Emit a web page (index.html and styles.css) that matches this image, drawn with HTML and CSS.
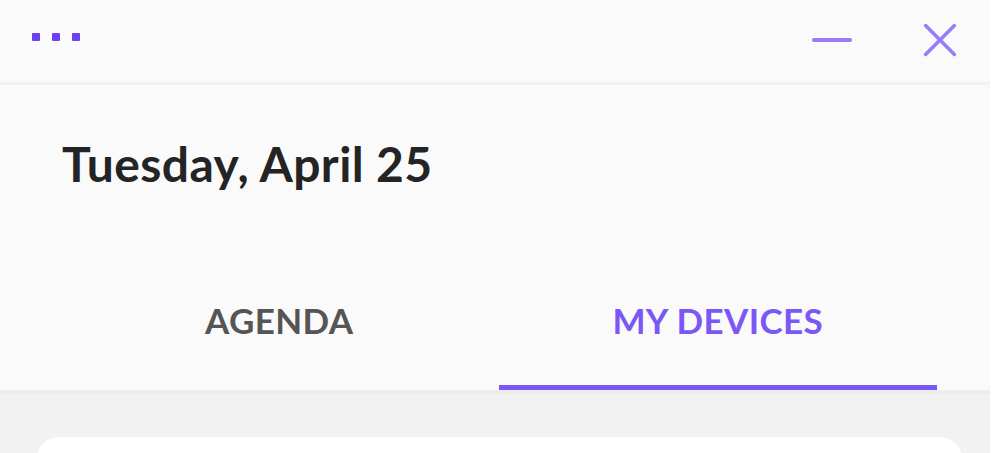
FILE: index.html
```html
<!DOCTYPE html>
<html>
<head>
<meta charset="utf-8">
<link rel="stylesheet" href="styles.css">
</head>
<body>
<div class="app">
  <div class="titlebar">
    <div class="menu"><span class="dot"></span><span class="dot"></span><span class="dot"></span></div>
    <div class="controls">
      <svg class="icon-min" width="40" height="10" viewBox="0 0 40 10"><line x1="2" y1="5" x2="38" y2="5" stroke="#9a7cf7" stroke-width="4" stroke-linecap="round"/></svg>
      <svg class="icon-close" width="40" height="40" viewBox="0 0 40 40"><path d="M4 4 L36 36 M36 4 L4 36" stroke="#9a7cf7" stroke-width="4" stroke-linecap="round"/></svg>
    </div>
  </div>
  <div class="header">
    <h1 class="date">Tuesday, April 25</h1>
    <div class="tabs">
      <div class="tab">AGENDA</div>
      <div class="tab active">MY DEVICES</div>
    </div>
  </div>
  <div class="content">
    <div class="card"></div>
  </div>
</div>
</body>
</html>
```
FILE: styles.css
```css
html, body {
  margin: 0;
  padding: 0;
  background: #ffffff;
  overflow: hidden;
}
.app {
  width: 990px;
  height: 453px;
  background: #fafafa;
  font-family: Lato, "Open Sans", sans-serif;
  display: flex;
  flex-direction: column;
  overflow: hidden;
}
.titlebar {
  flex: none;
  display: flex;
  align-items: center;
  justify-content: space-between;
  padding: 0 32px 0 32px;
  border-bottom: 3px solid #f2f2f2;
  box-sizing: border-box;
  height: 85px;
}
.menu {
  display: flex;
  gap: 12px;
  margin-top: -9px;
}
.dot {
  width: 8px;
  height: 8px;
  background: #6b40f3;
  border-radius: 1px;
}
.controls {
  display: flex;
  align-items: center;
  gap: 70px;
  margin-top: -2px;
}
.icon-close { width: 36px; height: 36px; }
.header {
  flex: none;
  display: flex;
  flex-direction: column;
}
.date {
  margin: 0;
  padding: 55px 0 0 62px;
  height: 98px;
  box-sizing: border-box;
  font-size: 48px;
  font-weight: 700;
  color: #242424;
  line-height: 1;
  letter-spacing: 0.4px;
}
.tabs {
  display: flex;
  padding: 0 53px 0 60px;
  height: 207px;
  box-sizing: border-box;
}
.tab {
  flex: 1;
  display: flex;
  align-items: flex-end;
  justify-content: center;
  padding-bottom: 50px;
  border-bottom: 5px solid transparent;
  line-height: 30px;
  font-size: 35px;
  font-weight: 700;
  color: #555555;
  letter-spacing: 0.4px;
}
.tab.active {
  color: #7b57f6;
  border-bottom-color: #7b57f6;
}
.content {
  flex: 1;
  background: #f2f2f2;
  border-top: 4px solid #ececec;
  padding: 43px 28px 0 37px;
}
.card {
  background: #ffffff;
  height: 100px;
  border-radius: 22px;
}
```
